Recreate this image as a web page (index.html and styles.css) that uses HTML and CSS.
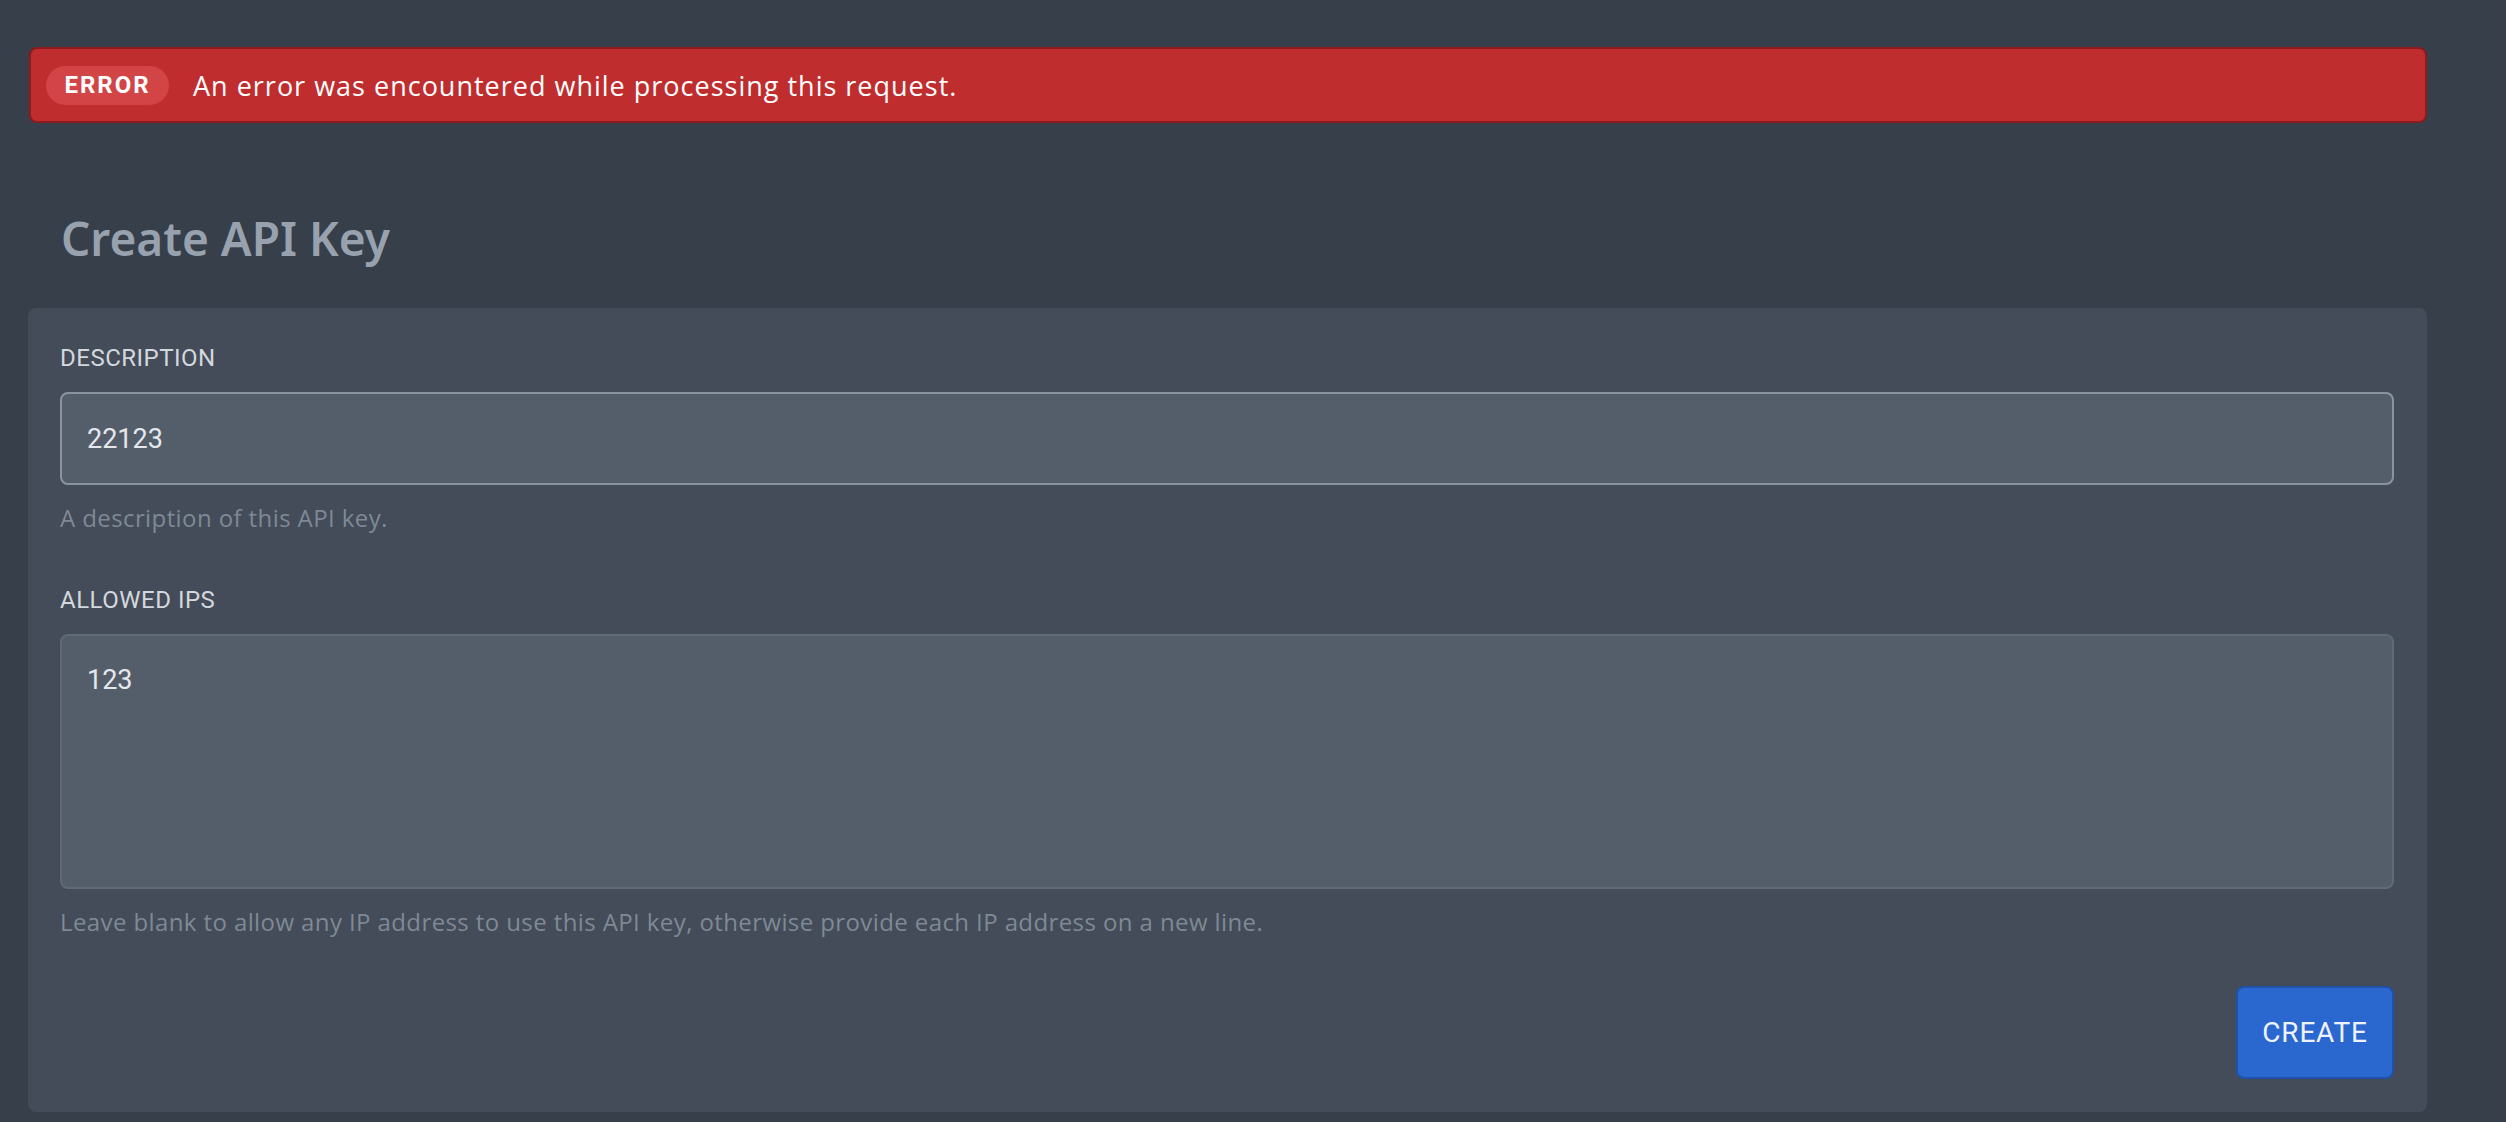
FILE: index.html
```html
<!DOCTYPE html>
<html lang="en">
<head>
<meta charset="utf-8">
<title>Create API Key</title>
<link rel="stylesheet" href="styles.css">
</head>
<body>
<div class="page">
  <div class="alert">
    <span class="badge">ERROR</span>
    <span class="alert-msg">An error was encountered while processing this request.</span>
  </div>
  <h1 class="title">Create API Key</h1>
  <div class="card">
    <label class="label">DESCRIPTION</label>
    <div class="input">22123</div>
    <p class="help">A description of this API key.</p>
    <label class="label label-2">ALLOWED IPS</label>
    <div class="textarea">123</div>
    <p class="help">Leave blank to allow any IP address to use this API key, otherwise provide each IP address on a new line.</p>
    <div class="actions">
      <button class="btn">CREATE</button>
    </div>
  </div>
</div>
</body>
</html>
```
FILE: styles.css
```css
html, body {
  margin: 0;
  padding: 0;
  background: #373f4b;
  font-family: Roboto, "Liberation Sans", sans-serif;
}
.page {
  width: 2399px;
  padding-left: 28px;
  padding-top: 47px;
}
.alert {
  box-sizing: border-box;
  height: 76px;
  margin-left: 1px;
  background: #c02d2f;
  border: 2px solid #8d1b1e;
  border-radius: 8px;
  display: flex;
  align-items: center;
  padding-left: 15px;
}
.badge {
  box-sizing: border-box;
  width: 123px;
  height: 39px;
  border-radius: 20px;
  background: #d24446;
  color: #ffffff;
  font-weight: 700;
  font-size: 24px;
  letter-spacing: 2px;
  display: flex;
  align-items: center;
  justify-content: center;
}
.alert-msg {
  margin-left: 24px;
  color: #ffffff;
  font-family: "Open Sans", sans-serif;
  font-size: 27px;
  letter-spacing: 1px;
}
.title {
  margin: 86px 0 0 33px;
  font-family: "Noto Sans", sans-serif;
  font-weight: 600;
  font-size: 46px;
  line-height: 58px;
  color: #98a2ae;
}
.card {
  margin-top: 41px;
  background: #434c58;
  border-radius: 8px;
  padding: 34px 33px 33px 32px;
}
.label {
  display: block;
  font-size: 24px;
  line-height: 32px;
  color: #d3d8de;
  letter-spacing: 0.5px;
}
.label-2 {
  margin-top: 50px;
}
.input {
  box-sizing: border-box;
  margin-top: 18px;
  height: 93px;
  background: #545e6b;
  border: 2px solid #8a94a0;
  border-radius: 8px;
  padding-left: 25px;
  display: flex;
  align-items: center;
  font-size: 27px;
  color: #e4e7eb;
}
.textarea {
  box-sizing: border-box;
  margin-top: 18px;
  height: 255px;
  background: #545e6b;
  border: 2px solid #5f6a77;
  border-radius: 8px;
  padding: 24px 25px;
  font-size: 27px;
  line-height: 40px;
  color: #e4e7eb;
}
.help {
  margin: 17px 0 0;
  font-family: "Open Sans", sans-serif;
  font-size: 24px;
  letter-spacing: 0.4px;
  line-height: 32px;
  color: #7f8995;
}
.actions {
  display: flex;
  justify-content: flex-end;
  margin-top: 48px;
}
.btn {
  box-sizing: border-box;
  width: 158px;
  height: 93px;
  background: #2a67cf;
  border: 2px solid #1f52ab;
  border-radius: 8px;
  color: #edf3fc;
  font-family: Roboto, sans-serif;
  font-size: 28px;
  letter-spacing: 0.8px;
  padding: 0;
}
```
